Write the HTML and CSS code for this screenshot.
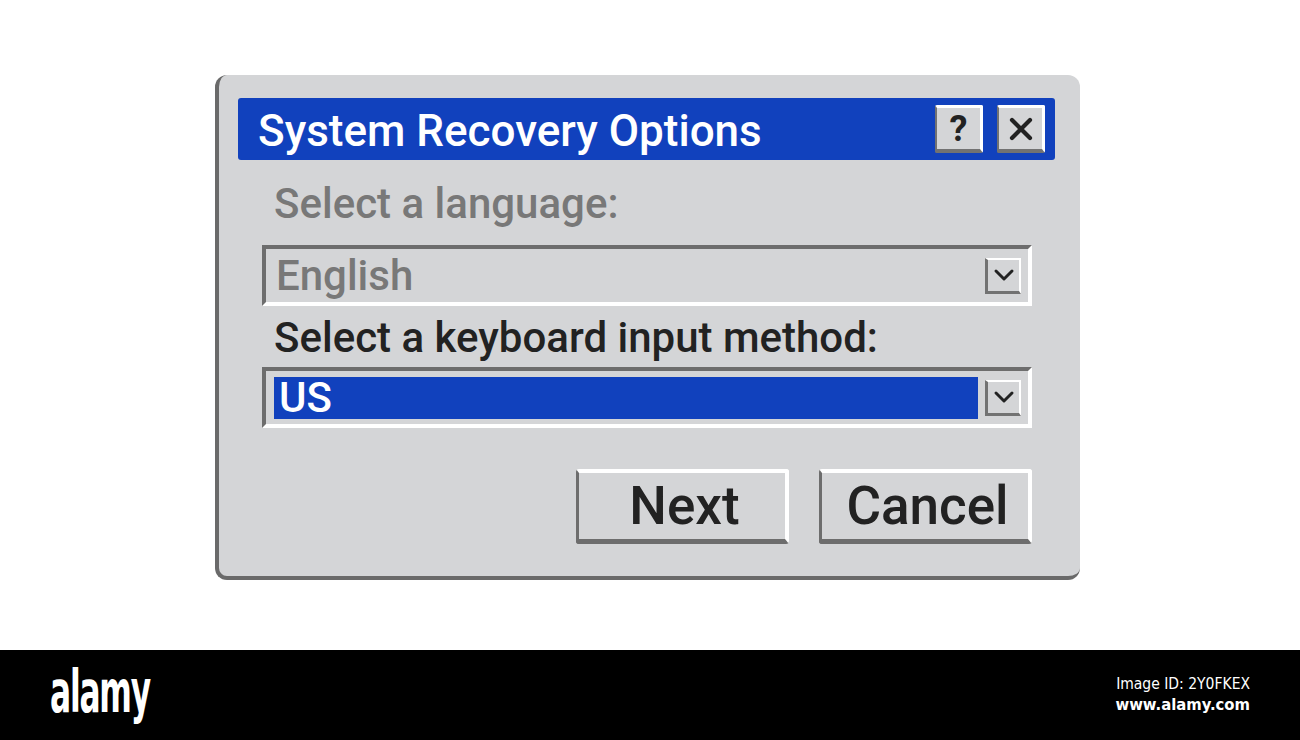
FILE: index.html
```html
<!DOCTYPE html>
<html lang="en">
<head>
  <meta charset="UTF-8">
  <title>System Recovery Options</title>
  <link rel="stylesheet" href="styles.css">
</head>
<body>
  <div class="stage">
    <div class="dialog">
      <div class="titlebar">
        <span class="title">System Recovery Options</span>
        <div class="title-btns">
          <button class="tbtn tbtn-help">?</button>
          <button class="tbtn">
            <svg width="26" height="26" viewBox="0 0 26 26"><path d="M4 4 L22 22 M22 4 L4 22" stroke="#222" stroke-width="4.2" stroke-linecap="round"/></svg>
          </button>
        </div>
      </div>

      <div class="dlg-body">
        <div class="label label-off">Select a language:</div>
        <div class="combo">
          <span class="combo-value combo-value-off">English</span>
          <span class="combo-arrow">
            <svg width="24" height="24" viewBox="0 0 24 24"><path d="M4 8 L12 16 L20 8" fill="none" stroke="#222" stroke-width="3" stroke-linecap="round" stroke-linejoin="round"/></svg>
          </span>
        </div>

        <div class="label">Select a keyboard input method:</div>
        <div class="combo">
          <span class="combo-value selected">US</span>
          <span class="combo-arrow">
            <svg width="24" height="24" viewBox="0 0 24 24"><path d="M4 8 L12 16 L20 8" fill="none" stroke="#222" stroke-width="3" stroke-linecap="round" stroke-linejoin="round"/></svg>
          </span>
        </div>

        <div class="actions">
          <button class="btn">Next</button>
          <button class="btn">Cancel</button>
        </div>
      </div>
    </div>
  </div>

  <footer class="credit">
    <span class="logo">alamy</span>
    <div class="credit-info">
      <div class="image-id">Image ID: 2Y0FKEX</div>
      <div class="site">www.alamy.com</div>
    </div>
  </footer>
</body>
</html>
```

FILE: styles.css
```css
body {
  margin: 0;
  padding: 0;
  background: #fff;
  font-family: Roboto, 'Noto Sans', sans-serif;
  overflow: hidden;
}

.stage {
  height: 650px;
  padding: 75px 0 0 215px;
  box-sizing: border-box;
}

.dialog {
  width: 865px;
  height: 505px;
  box-sizing: border-box;
  background: #d4d5d7;
  border-left: 4px solid #6a6a6a;
  border-bottom: 4px solid #6a6a6a;
  border-radius: 12px;
  padding: 23px 25px 0 19px;
}

.titlebar {
  height: 62px;
  background: #1141bd;
  border-radius: 3px;
  display: flex;
  align-items: center;
  justify-content: space-between;
  padding: 0 10px 0 20px;
}

.title {
  color: #fff;
  font-size: 44px;
  font-weight: 500;
  line-height: 62px;
  margin-top: 4px;
}

.title-btns {
  display: flex;
  gap: 14px;
}

.tbtn {
  width: 48px;
  height: 48px;
  box-sizing: border-box;
  padding: 0;
  background: #d4d5d7;
  border-style: solid;
  border-width: 3px 3px 4px 2px;
  border-color: #fff #fff #727272 #727272;
  border-radius: 2px;
  display: flex;
  align-items: center;
  justify-content: center;
  font-family: Roboto, sans-serif;
  font-size: 36px;
  font-weight: 700;
  color: #222;
}

.dlg-body {
  padding: 0 23px 0 24px;
}

.label {
  font-size: 42px;
  font-weight: 500;
  line-height: 48px;
  color: #222;
  padding-left: 12px;
  margin: 8px 0 5px;
}

.label-off {
  color: #787878;
  margin: 20px 0 17px;
}

.combo {
  height: 61px;
  box-sizing: border-box;
  border-style: solid;
  border-width: 4px;
  border-color: #6d6d6d #fff #fff #6d6d6d;
  display: flex;
  align-items: center;
  gap: 7px;
  padding: 0 7px 0 8px;
}

.combo-value {
  flex: 1;
  height: 42px;
  line-height: 42px;
  font-size: 42px;
  font-weight: 500;
  padding-left: 5px;
}

.combo-value-off {
  color: #787878;
  padding-left: 2px;
}

.selected {
  background: #1141bd;
  color: #fff;
}

.combo-arrow {
  width: 36px;
  height: 36px;
  box-sizing: border-box;
  background: #d4d5d7;
  border-style: solid;
  border-width: 2px 2px 3px 3px;
  border-color: #fff #fff #727272 #727272;
  display: flex;
  align-items: center;
  justify-content: center;
}

.actions {
  display: flex;
  justify-content: flex-end;
  gap: 30px;
  margin-top: 41px;
}

.btn {
  width: 213px;
  height: 75px;
  box-sizing: border-box;
  background: #d4d5d7;
  border-style: solid;
  border-width: 4px 4px 5px 3px;
  border-color: #fff #fff #6d6d6d #6d6d6d;
  border-radius: 3px;
  font-family: Roboto, sans-serif;
  font-size: 53px;
  font-weight: 500;
  color: #222;
  padding: 0 0 0 5px;
}

.credit {
  height: 90px;
  background: #000;
  display: flex;
  align-items: center;
  justify-content: space-between;
  padding: 0 50px;
}

.logo {
  display: inline-block;
  color: #fff;
  font-family: 'DejaVu Sans Condensed', 'DejaVu Sans', sans-serif;
  font-weight: bold;
  font-size: 58px;
  letter-spacing: -2px;
  transform: scaleX(0.6);
  transform-origin: left center;
  margin-top: -6px;
}

.credit-info {
  text-align: right;
  color: #fff;
  font-family: 'DejaVu Sans Condensed', 'DejaVu Sans', sans-serif;
}

.image-id {
  font-size: 15.5px;
  line-height: 20px;
}

.site {
  font-size: 16.5px;
  font-weight: bold;
  line-height: 22px;
}
```
